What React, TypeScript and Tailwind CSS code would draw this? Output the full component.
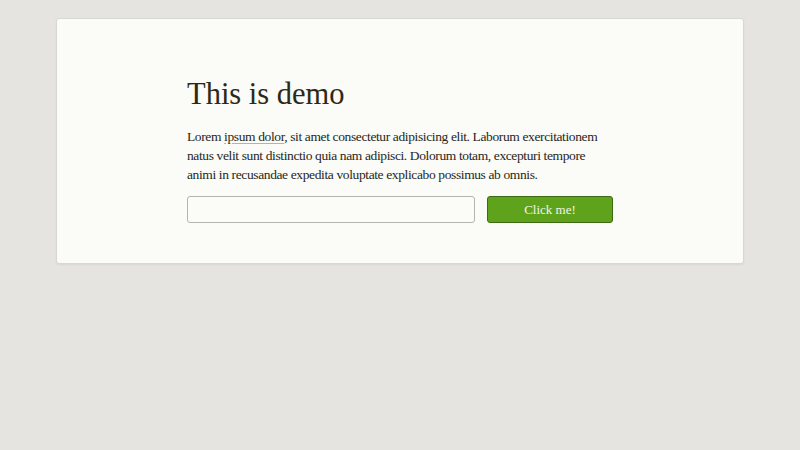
export default function App() {
  return (
    <div className="min-h-[450px] bg-[#e5e4e0] px-14 pt-[18px] font-['Liberation_Serif',serif]">
      <div className="rounded-[3px] border border-[#d8d8d2] bg-[#fbfbf7] pt-[55px] pb-10 shadow-[0_1px_2px_rgba(0,0,0,0.06)]">
        <div className="mx-auto w-[426px]">
          <h1 className="text-[30.5px] leading-[40px] text-[#2b2a16]">This is demo</h1>
          <p className="mt-[13px] text-[13.5px] leading-[19px] tracking-[-0.38px] text-[#27271c]">
            Lorem{" "}
            <a className="underline decoration-[#9fc48a] underline-offset-2">ipsum dolor</a>
            , sit amet consectetur adipisicing elit. Laborum exercitationem natus velit sunt distinctio
            quia nam adipisci. Dolorum totam, excepturi tempore animi in recusandae expedita voluptate
            explicabo possimus ab omnis.
          </p>
          <div className="mt-[12px] flex gap-3">
            <input
              type="text"
              className="h-[27px] w-[288px] rounded-[3px] border border-[#b5b5ae] bg-[#fbfbf7] px-2 outline-none"
            />
            <button
              type="button"
              className="h-[27px] flex-1 rounded-[3px] border border-[#3f6a14] bg-[#5fa31c] text-[13px] text-[#eef6e4]"
            >
              Click me!
            </button>
          </div>
        </div>
      </div>
    </div>
  );
}
